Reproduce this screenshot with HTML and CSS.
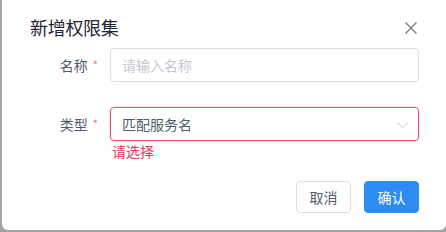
FILE: index.html
```html
<!DOCTYPE html>
<html lang="zh-CN">
<head>
    <meta charset="UTF-8">
    <meta name="viewport" content="width=device-width, initial-scale=1.0">
    <title>新增权限集</title>
    <link rel="stylesheet" href="styles.css">
</head>
<body>
    <div class="modal">
        <div class="modal-header">
            <div class="modal-title">新增权限集</div>
            <span class="modal-close">
                <svg width="12" height="12" viewBox="0 0 12 12">
                    <path d="M0.5 0.5 L11.5 11.5 M11.5 0.5 L0.5 11.5" stroke="#7d7d7d" stroke-width="1.4" fill="none"/>
                </svg>
            </span>
        </div>

        <form class="form">
            <div class="form-item">
                <label class="form-label required">名称</label>
                <div class="form-control">
                    <input type="text" class="input" placeholder="请输入名称">
                </div>
            </div>
            <div class="form-item has-error">
                <label class="form-label required">类型</label>
                <div class="form-control">
                    <div class="select">
                        <span class="select-value">匹配服务名</span>
                        <svg class="select-arrow" width="12" height="6" viewBox="0 0 12 6">
                            <path d="M0.5 0.5 L6 5.5 L11.5 0.5" stroke="#c5c8ce" stroke-width="1" fill="none"/>
                        </svg>
                    </div>
                    <div class="form-error">请选择</div>
                </div>
            </div>
        </form>

        <div class="modal-footer">
            <button type="button" class="btn">取消</button>
            <button type="button" class="btn btn-primary">确认</button>
        </div>
    </div>
</body>
</html>
```

FILE: styles.css
```css
body {
    margin: 0;
    padding: 0;
    background-color: #a3a3a3;
    font-family: "Noto Sans CJK SC", "Noto Sans", sans-serif;
    color: #515a6e;
}
.modal {
    margin-left: 2px;
    height: 230px;
    background-color: #fff;
    border-radius: 0 0 6px 6px;
    padding: 16px 27px 0 28px;
    box-sizing: border-box;
}
.modal-header {
    display: flex;
    justify-content: space-between;
    align-items: center;
    height: 22px;
}
.modal-title {
    font-size: 18px;
    line-height: 22px;
    color: #1f2533;
    letter-spacing: -0.3px;
}
.modal-close {
    display: flex;
    padding-top: 1px;
    margin-right: 2px;
}
.form {
    margin-top: 10px;
}
.form-item {
    display: flex;
    margin-bottom: 24px;
}
.form-item.has-error {
    margin-bottom: 0;
}
.form-label {
    width: 80px;
    padding-right: 12px;
    box-sizing: border-box;
    text-align: right;
    font-size: 14px;
    line-height: 34px;
    color: #515a6e;
}
.form-label.required::after {
    content: "*";
    color: #ec6f84;
    font-size: 11px;
    margin-left: 5px;
    position: relative;
    top: -2px;
}
.form-control {
    flex: 1;
}
.input {
    width: 100%;
    height: 34px;
    box-sizing: border-box;
    border: 1px solid #dcdee2;
    border-radius: 4px;
    padding: 0 11px;
    font-family: inherit;
    font-size: 14px;
    color: #515a6e;
    outline: none;
}
.input::placeholder {
    color: #c5c8ce;
}
.select {
    display: flex;
    justify-content: space-between;
    align-items: center;
    height: 34px;
    box-sizing: border-box;
    border: 1px solid #dcdee2;
    border-radius: 4px;
    padding: 0 9px 0 11px;
    font-size: 14px;
    color: #515a6e;
}
.has-error .select {
    border-color: #e4566e;
    box-shadow: 0 0 0 1px rgba(228, 86, 110, 0.18);
}
.select-arrow {
    margin-top: 1px;
}
.form-error {
    font-size: 14px;
    line-height: 20px;
    margin-top: 0;
    padding-left: 2px;
    color: #e4395a;
}
.modal-footer {
    display: flex;
    justify-content: flex-end;
    gap: 13px;
    margin-top: 20px;
}
.btn {
    width: 55px;
    height: 32px;
    padding: 0;
    border: 1px solid #dcdee2;
    border-radius: 4px;
    background-color: #fff;
    color: #515a6e;
    font-family: inherit;
    font-size: 14px;
    cursor: pointer;
}
.btn-primary {
    background-color: #2d8cf0;
    border-color: #2d8cf0;
    color: #fff;
}
```
